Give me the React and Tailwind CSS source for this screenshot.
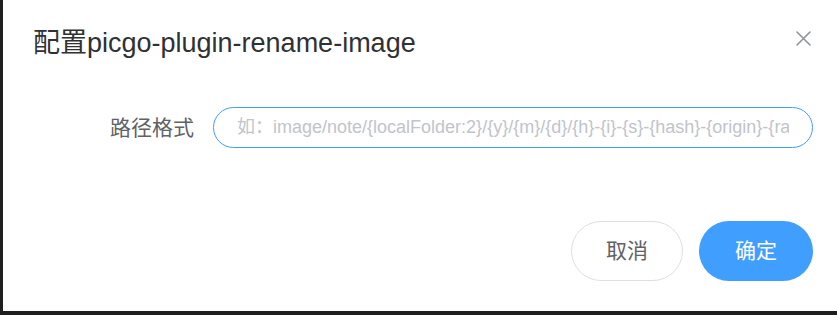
export default function App() {
  return (
    <div
      className="w-[837px] h-[315px] bg-[#1f1f1f] pl-[3px] pb-[4px] flex"
      style={{ fontFamily: '"Liberation Sans", "Noto Sans CJK SC", sans-serif' }}
    >
      <div className="flex-1 bg-white flex flex-col">
        <div className="flex items-start justify-between pt-[25px] pl-[30px] pr-[26px]">
          <div className="text-[27px] leading-[36px] text-[#303133]">配置picgo-plugin-rename-image</div>
          <button className="mt-[6px] w-[15px] h-[15px] flex items-center justify-center">
            <svg width="15" height="15" viewBox="0 0 15 15" fill="none">
              <path d="M1 1L14 14M14 1L1 14" stroke="#909399" strokeWidth="1.6" strokeLinecap="round" />
            </svg>
          </button>
        </div>
        <div className="flex items-center mt-[46px] pl-[30px] pr-[24px]">
          <label className="w-[180px] shrink-0 text-right pr-[19px] text-[21px] text-[#606266]">路径格式</label>
          <input
            className="flex-1 h-[41px] rounded-full border border-[#409eff] outline-none pl-[23px] pr-[23px] text-[18px] text-[#606266] placeholder:text-[#c0c4cc]"
            placeholder="如：image/note/{localFolder:2}/{y}/{m}/{d}/{h}-{i}-{s}-{hash}-{origin}-{rand:6}"
          />
        </div>
        <div className="flex justify-end gap-[16px] mt-[73px] pr-[24px]">
          <button className="w-[112px] h-[60px] rounded-full border border-[#dcdfe6] bg-white text-[21px] text-[#606266]">
            取消
          </button>
          <button className="w-[114px] h-[60px] rounded-full bg-[#409eff] text-[21px] text-white">
            确定
          </button>
        </div>
      </div>
    </div>
  );
}
